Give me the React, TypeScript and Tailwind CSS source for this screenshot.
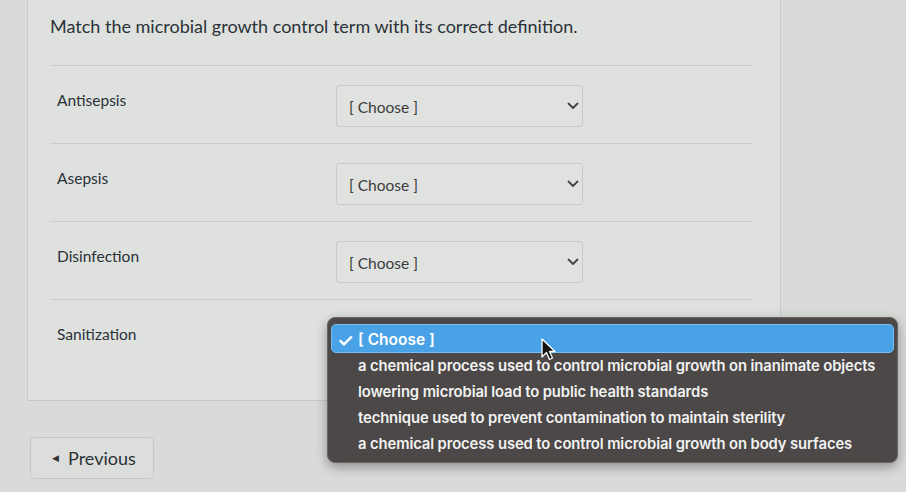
import React from "react";

const rows = ["Antisepsis", "Asepsis", "Disinfection", "Sanitization"];
const options = [
  "a chemical process used to control microbial growth on inanimate objects",
  "lowering microbial load to public health standards",
  "technique used to prevent contamination to maintain sterility",
  "a chemical process used to control microbial growth on body surfaces",
];

function Chevron() {
  return (
    <svg width="12" height="8" viewBox="0 0 12 8" className="text-[#444]">
      <path d="M1.5 1.5 L6 6 L10.5 1.5" fill="none" stroke="currentColor" strokeWidth="1.8" strokeLinecap="round" strokeLinejoin="round" />
    </svg>
  );
}

function SelectBox() {
  return (
    <div className="w-[247px] h-[42px] border border-[#c8cac8] rounded-[3px] bg-[#e0e2e0] flex items-center justify-between pl-[12px] pr-[3px]">
      <span className="text-[15.5px] text-[#3a3c3c] pt-[3px]">[ Choose ]</span>
      <Chevron />
    </div>
  );
}

export default function App() {
  return (
    <div
      className="w-[906px] h-[492px] bg-[#d9dbd9] relative overflow-hidden"
      style={{ fontFamily: "Lato, 'Noto Sans', sans-serif" }}
    >
      <div className="ml-[27px] w-[754px] border-l border-r border-b border-[#c6c8c6] bg-[#dfe1df] pl-[22px] pr-[28px]">
        <div className="pt-[13px] h-[66px] text-[18px] text-[#2a3238] border-b border-[#cbcdcb]">
          Match the microbial growth control term with its correct definition.
        </div>
        {rows.map((r, i) => (
          <div
            key={r}
            className={
              "flex pl-[7px] pt-[19px] " +
              (i < 3 ? "h-[78px] border-b border-[#cbcdcb]" : "h-[100px]")
            }
          >
            <div className="w-[279px] pt-[4px] text-[15.5px] text-[#2a3238]">{r}</div>
            {i < 3 && <SelectBox />}
          </div>
        ))}
      </div>

      <div className="ml-[30px] mt-[36px] w-[124px] h-[42px] border border-[#c6c8c6] rounded-[4px] bg-[#dcdedc] flex items-center pl-[21px] text-[18px] text-[#2a3238]">
        <span className="text-[9px] mr-[9px] text-[#333]">◀</span>
        Previous
      </div>

      <div
        className="absolute left-[327px] top-[317px] w-[571px] h-[146px] rounded-[8px] bg-[#4b4847] border border-[#6a6664] shadow-[0_4px_12px_rgba(0,0,0,0.35)] px-[3px] pt-[6px]"
        style={{ fontFamily: "Inter, Roboto, sans-serif" }}
      >
        <div className="h-[29px] rounded-[5px] bg-[#4aa2e6] border border-[#79bcef] flex items-center pl-[5px] pt-[3px] text-[15.5px] font-semibold text-white">
          <span className="w-[21px] text-[19px] leading-none">✓</span>
          <span>[ Choose ]</span>
        </div>
        <div className="pl-[27px] text-[14.8px] font-semibold text-[#f2f2f2] tracking-[-0.1px]">
          {options.map((o) => (
            <div key={o} className="h-[26px] leading-[26px]">
              {o}
            </div>
          ))}
        </div>
      </div>

      <svg className="absolute left-[541px] top-[338px]" width="16" height="24" viewBox="0 0 16 24">
        <path d="M1 1 L1 19 L5.5 14.5 L8.5 21.5 L11.5 20 L8.5 13.5 L14 13.5 Z" fill="#111" stroke="#fff" strokeWidth="1.3" strokeLinejoin="round" />
      </svg>
    </div>
  );
}
